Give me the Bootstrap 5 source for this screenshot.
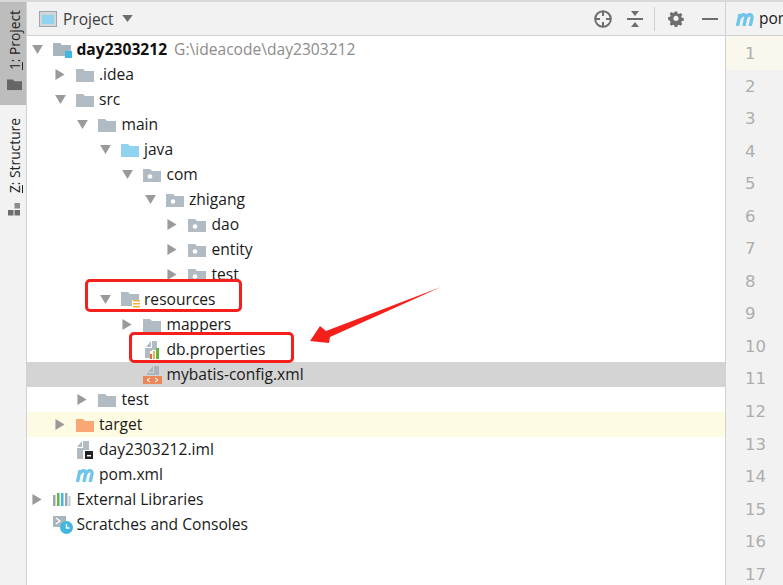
<!DOCTYPE html>
<html lang="en"><head><meta charset="utf-8"><title>Project</title>
<link href="https://cdn.jsdelivr.net/npm/bootstrap@5.3.0/dist/css/bootstrap.min.css" rel="stylesheet">
<style>
html,body{height:100%;overflow:hidden}
body{background:#fff;font-family:"Open Sans","Noto Sans",sans-serif;font-size:15.6px;color:#1a1a1a}
.ide{width:783px;height:585px;border-top:2px solid #d9d9d9}
.strip{width:27px;background:#f2f2f2;border-right:1px solid #d1d1d1;flex:none}
.stab{width:26px;align-items:center;font-size:13.8px;line-height:1;color:#222;padding-left:3px}
.stab svg{flex:none}
.stab-a{height:103px;background:#bdbdbd;padding-top:8px}
.stab-b{height:104px;padding-top:13px}
.stab-b svg{margin-top:2px}
.vt{writing-mode:vertical-rl;transform:rotate(180deg);white-space:nowrap}
.phead{height:34px;background:#f2f2f2;border-bottom:1px solid #d1d1d1;padding-left:12px;padding-right:5px;flex:none}
.ptitle{font-size:15.5px;color:#3c3c3c;margin-left:6px;position:relative;top:1px}
.tree{flex:1;padding-top:1px;min-width:0}
.trow{height:25px;line-height:25px;white-space:nowrap;display:flex;align-items:center}
.d0{padding-left:5px}.d1{padding-left:27.5px}.d2{padding-left:50px}.d3{padding-left:72.5px}.d4{padding-left:95px}.d5{padding-left:117.5px}.d6{padding-left:140px}
.arw{width:22px;flex:none;display:flex}
.ico{width:22.5px;flex:none;display:flex;margin-left:-1px;margin-right:1px}
.hl-y{background:#fefbe3}
.hl-s{background:#d4d4d4}
.path{color:#8c8c8c;margin-left:7px}
.fw-x{font-weight:700;color:#111}
.sep{width:1px;height:24px;background:#d1d1d1}
.hgap-a{margin-left:15px}
.hgap-b{margin-left:11px}
.hgap-c{margin-left:13px}
.hgap-d{margin-left:18px}
.hbar{padding-right:2px}
.edit{width:58px;border-left:1px solid #d1d1d1;flex:none;overflow:hidden}
.etab{height:34px;background:#f2f2f2;border-bottom:1px solid #d1d1d1;padding-left:10px;white-space:nowrap;flex:none;font-size:15.5px;overflow:hidden}
.etab svg{flex:none}
.gutter{background:#f2f2f2;flex:1;font-family:"DejaVu Sans",sans-serif;font-size:16.5px;color:#adadad;padding-left:19px;padding-top:1px}
.ln{height:32.55px;line-height:34.5px}
.ln-c{background:#faf8ec;margin-left:-19px;padding-left:19px;margin-top:-1px;padding-top:1px;height:33.55px}
.mk{position:absolute;border:3px solid #f5201c;border-radius:5px}
.mk1{left:85px;top:279px;width:157px;height:33px}
.mk2{left:129px;top:332px;width:165px;height:31px}
.arrowmk{position:absolute;left:305px;top:283px}
</style></head><body>
<svg width="0" height="0" class="position-absolute">
<symbol id="fo" viewBox="0 0 18 14"><path d="M0 1h7l2 2h9v11H0z"/></symbol>
<symbol id="pk" viewBox="0 0 18 14"><path fill-rule="evenodd" d="M0 1h7l2 2h9v11H0zM7 6.2a2.3 2.3 0 1 0 .01 0z"/></symbol>
<symbol id="dn" viewBox="0 0 12 10"><path d="M0 0h12L6 10z"/></symbol>
<symbol id="rt" viewBox="0 0 10 12"><path d="M0 0l10 6-10 6z"/></symbol>
<symbol id="mv" viewBox="0 0 19 14"><path d="M1.500 14l2.500-12M4 6c1.500-4 6-4.500 5.500 0L8 14M10 6c1.500-4 6.500-4.500 6 0l-1.800 8" fill="none" stroke="#6fc6ea" stroke-width="3.400"/></symbol>
</svg>
<div class="ide d-flex position-relative">
 <div class="strip d-flex flex-column">
  <div class="stab stab-a d-flex flex-column gap-2"><span class="vt"><u>1</u>: Project</span>
   <svg width="15" height="13" viewBox="0 0 18 14" fill="#666"><use href="#fo"/></svg></div>
  <div class="stab stab-b d-flex flex-column gap-2"><span class="vt"><u>Z</u>: Structure</span>
   <svg width="13" height="13" viewBox="0 0 13 13" fill="#6e6e6e"><rect x="6.500" y="0" width="5.500" height="5.500" fill="#8c8c8c"/><rect x="0" y="7" width="5.500" height="5.500"/><rect x="6.500" y="7" width="5.500" height="5.500"/></svg></div>
 </div>
 <div class="d-flex flex-column flex-grow-1" style="min-width:0">
  <div class="phead d-flex align-items-center">
   <svg width="18" height="16" viewBox="0 0 18 16"><rect x=".5" y=".5" width="17" height="15" fill="#d2d6d9" stroke="#9aa7b0"/><rect x="3" y="4" width="12" height="9" fill="#8fd3ee"/></svg>
   <span class="ptitle">Project</span>
   <svg class="ms-2" width="11" height="7" viewBox="0 0 12 8" fill="#6e6e6e"><path d="M0 0h12L6 8z"/></svg>
   <div class="ms-auto d-flex align-items-center hbar">
    <svg width="18" height="18" viewBox="0 0 18 18" fill="none" stroke="#6e6e6e" stroke-width="2"><circle cx="9" cy="9" r="7.800"/><path d="M9 1v5M9 12v5M1 9h5M12 9h5"/></svg>
    <svg class="hgap-a" width="16" height="18" viewBox="0 0 16 18" fill="#6e6e6e"><path d="M0 8h16v2H0zM4 1h8L8 6zM8 12l4 5H4z"/></svg>
    <span class="sep hgap-b"></span>
    <svg class="hgap-c" width="16" height="16" viewBox="0 0 16 16" fill="#6e6e6e"><path fill-rule="evenodd" d="M6.500 0h3l.4 2.200 1.500.7 1.900-1.200 2 2.100-1.200 1.900.6 1.500 2.300.4v3l-2.300.4-.6 1.500 1.200 1.900-2 2-1.900-1.200-1.500.7-.4 2.300h-3l-.4-2.300-1.500-.7-1.900 1.200-2-2 1.200-1.900-.6-1.500L-1 9.400v-3l2.300-.4.6-1.500L.7 2.600l2-2 1.900 1.200 1.500-.7zM8 5a3 3 0 1 0 .01 0z" transform="translate(1 .5) scale(.87)"/></svg>
    <svg class="hgap-d" width="16" height="2" viewBox="0 0 16 2" fill="#6e6e6e"><rect width="16" height="2"/></svg>
   </div>
  </div>
  <div class="tree">
   <div class="trow d0"><span class="arw"><svg width="11" height="9" fill="#9a9a9a"><use href="#dn"/></svg></span><span class="ico"><svg width="19" height="18" viewBox="0 0 19 18"><path fill="#a9b5bd" d="M0 2h7l2 2h9v11H0z"/><rect x="12" y="10" width="7" height="7" fill="#40b6e0"/></svg></span><span class="fw-x">day2303212</span><span class="path">G:\ideacode\day2303212</span></div>
   <div class="trow d1"><span class="arw"><svg width="10" height="11" fill="#9a9a9a"><use href="#rt"/></svg></span><span class="ico"><svg width="18" height="14" fill="#b0bbc3"><use href="#fo"/></svg></span>.idea</div>
   <div class="trow d1"><span class="arw"><svg width="11" height="9" fill="#9a9a9a"><use href="#dn"/></svg></span><span class="ico"><svg width="18" height="14" fill="#b0bbc3"><use href="#fo"/></svg></span>src</div>
   <div class="trow d2"><span class="arw"><svg width="11" height="9" fill="#9a9a9a"><use href="#dn"/></svg></span><span class="ico"><svg width="18" height="14" fill="#b0bbc3"><use href="#fo"/></svg></span>main</div>
   <div class="trow d3"><span class="arw"><svg width="11" height="9" fill="#9a9a9a"><use href="#dn"/></svg></span><span class="ico"><svg width="18" height="14" fill="#8fd3ee"><use href="#fo"/></svg></span>java</div>
   <div class="trow d4"><span class="arw"><svg width="11" height="9" fill="#9a9a9a"><use href="#dn"/></svg></span><span class="ico"><svg width="18" height="14" fill="#b0bbc3"><use href="#pk"/></svg></span>com</div>
   <div class="trow d5"><span class="arw"><svg width="11" height="9" fill="#9a9a9a"><use href="#dn"/></svg></span><span class="ico"><svg width="18" height="14" fill="#b0bbc3"><use href="#pk"/></svg></span>zhigang</div>
   <div class="trow d6"><span class="arw"><svg width="10" height="11" fill="#9a9a9a"><use href="#rt"/></svg></span><span class="ico"><svg width="18" height="14" fill="#b0bbc3"><use href="#pk"/></svg></span>dao</div>
   <div class="trow d6"><span class="arw"><svg width="10" height="11" fill="#9a9a9a"><use href="#rt"/></svg></span><span class="ico"><svg width="18" height="14" fill="#b0bbc3"><use href="#pk"/></svg></span>entity</div>
   <div class="trow d6"><span class="arw"><svg width="10" height="11" fill="#9a9a9a"><use href="#rt"/></svg></span><span class="ico"><svg width="18" height="14" fill="#b0bbc3"><use href="#pk"/></svg></span>test</div>
   <div class="trow d3"><span class="arw"><svg width="11" height="9" fill="#9a9a9a"><use href="#dn"/></svg></span><span class="ico"><svg width="19" height="17" viewBox="0 0 19 17"><path fill="#b0bbc3" d="M0 1h7l2 2h9v6h-7v6H0z"/><path fill="#f4af3d" d="M12 9h7v1.500h-7zM12 12h7v1.500h-7zM12 15h7v1.500h-7z"/></svg></span>resources</div>
   <div class="trow d4"><span class="arw"><svg width="10" height="11" fill="#9a9a9a"><use href="#rt"/></svg></span><span class="ico"><svg width="18" height="14" fill="#b0bbc3"><use href="#fo"/></svg></span>mappers</div>
   <div class="trow d4"><span class="arw"></span><span class="ico"><svg width="17" height="19" viewBox="0 0 17 19"><path fill="#b0bbc3" d="M3 7l5-6v6zM9 1h5v9H9v1H7v7H2V8h7z"/><rect x="7" y="14" width="2" height="5" fill="#ef6a3a"/><rect x="10" y="11" width="2" height="8" fill="#f4af3d"/><rect x="13" y="8" width="3" height="11" fill="#62b543"/></svg></span>db.properties</div>
   <div class="trow d4 hl-s"><span class="arw"></span><span class="ico"><svg width="19" height="19" viewBox="0 0 19 19"><path fill="#a9b5bd" d="M5 7l5-6v6zM11 1h5v9H4V8h7z"/><rect y="11" width="19" height="8" fill="#e9865a"/><path d="M7 13l-3 2 3 2M12 13l3 2-3 2" fill="none" stroke="#fff"/></svg></span>mybatis-config.xml</div>
   <div class="trow d2"><span class="arw"><svg width="10" height="11" fill="#9a9a9a"><use href="#rt"/></svg></span><span class="ico"><svg width="18" height="14" fill="#b0bbc3"><use href="#fo"/></svg></span>test</div>
   <div class="trow d1 hl-y"><span class="arw"><svg width="10" height="11" fill="#9a9a9a"><use href="#rt"/></svg></span><span class="ico"><svg width="18" height="14" fill="#f9a875"><use href="#fo"/></svg></span>target</div>
   <div class="trow d1"><span class="arw"></span><span class="ico"><svg width="17" height="19" viewBox="0 0 17 19"><path fill="#b0bbc3" d="M1 7l5-6v6zM7 1h6v9H7v9H1V8h6z"/><rect x="9" y="11" width="8" height="8" fill="#222"/><rect x="11" y="15" width="4" height="1.500" fill="#fff"/></svg></span>day2303212.iml</div>
   <div class="trow d1"><span class="arw"></span><span class="ico"><svg width="19" height="14"><use href="#mv"/></svg></span>pom.xml</div>
   <div class="trow d0"><span class="arw"><svg width="10" height="11" fill="#9a9a9a"><use href="#rt"/></svg></span><span class="ico"><svg width="18" height="15" viewBox="0 0 18 15"><rect y="3" width="2.500" height="11" fill="#9aa7b0"/><rect x="4" y="1" width="2.500" height="13" fill="#62b543"/><rect x="8" y="1" width="2.500" height="13" fill="#40b6e0"/><rect x="12" y="1" width="2.500" height="13" fill="#9aa7b0"/><rect x="15.500" y="4" width="2" height="10" fill="#c4ccd2"/></svg></span>External Libraries</div>
   <div class="trow d0"><span class="arw"></span><span class="ico"><svg width="20" height="19" viewBox="0 0 20 19"><rect y="1" width="13" height="11" fill="#a9b5bd"/><path d="M3 3l4 3-4 3" fill="none" stroke="#fff" stroke-width="1.300"/><circle cx="13.500" cy="12.500" r="6.500" fill="#40b6e0"/><path d="M13.500 9v4h3" fill="none" stroke="#fff" stroke-width="1.400"/></svg></span>Scratches and Consoles</div>
  </div>
 </div>
 <div class="edit d-flex flex-column">
  <div class="etab d-flex align-items-center"><svg width="19" height="14"><use href="#mv"/></svg><span class="ms-1">pom.xml</span></div>
  <div class="gutter">
   <div class="ln ln-c">1</div><div class="ln">2</div><div class="ln">3</div><div class="ln">4</div><div class="ln">5</div><div class="ln">6</div><div class="ln">7</div><div class="ln">8</div><div class="ln">9</div><div class="ln">10</div><div class="ln">11</div><div class="ln">12</div><div class="ln">13</div><div class="ln">14</div><div class="ln">15</div><div class="ln">16</div><div class="ln">17</div>
  </div>
 </div>
</div>
<div class="mk mk1"></div>
<div class="mk mk2"></div>
<svg class="arrowmk" width="140" height="64" viewBox="305 283 140 64"><polygon fill="#f5201c" points="310,341 320,326 326,331 441,287 330,337 329,343"/></svg>
</body></html>
